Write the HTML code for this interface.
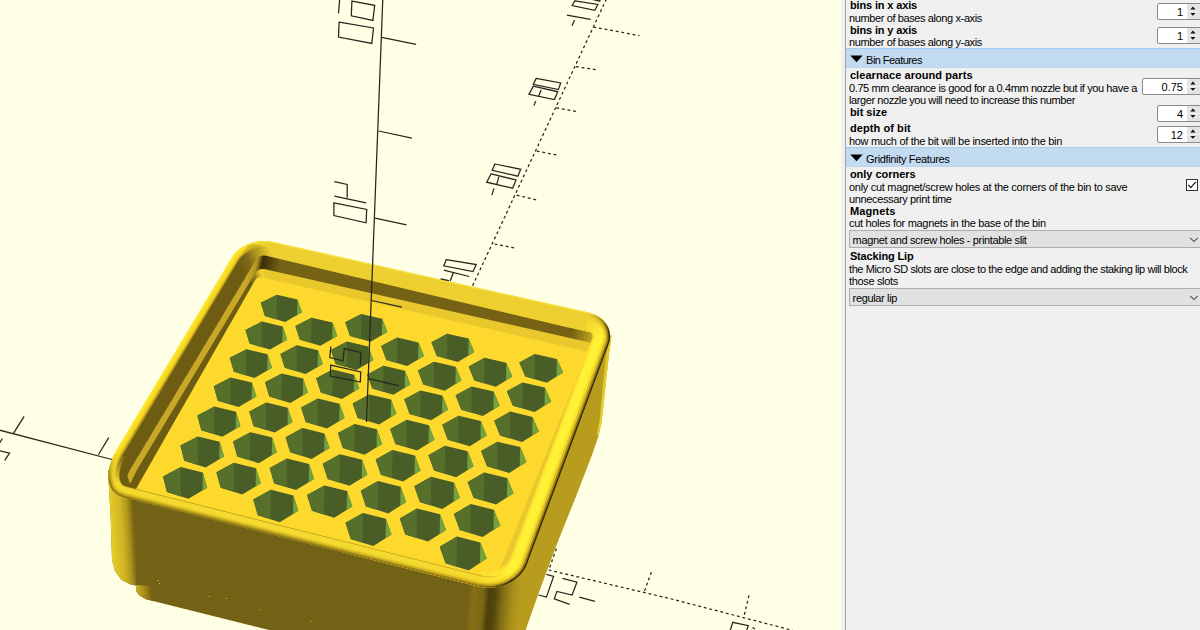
<!DOCTYPE html>
<html><head><meta charset="utf-8"><title>OpenSCAD</title>
<style>
html,body{margin:0;padding:0;background:#f0f0f0;}
body{width:1200px;height:630px;overflow:hidden;position:relative;font-family:"Liberation Sans",sans-serif;}
#vp{position:absolute;left:0;top:0;width:841px;height:630px;background:#ffffe5;overflow:hidden;}
#pn{position:absolute;left:841px;top:0;width:359px;height:630px;background:#f0f0f0;overflow:hidden;}
#pn .vl{position:absolute;left:4px;top:0;width:1px;height:630px;background:#a3a3a3;}
.t{position:absolute;font-size:11px;line-height:13px;height:13px;white-space:nowrap;color:#000;}
.t.b{font-weight:bold;}
.hd{position:absolute;left:5px;width:354px;height:18px;background:#c3dbf1;border-top:1px solid #9fcdf3;border-bottom:1px solid #b8d6f0;}
.sp{position:absolute;height:15px;background:#fff;border:1px solid #8a8a8a;border-radius:2px;}
.sp .v{position:absolute;width:60px;text-align:right;top:1.8px;font-size:11px;line-height:13px;}/*0*/
.sp .btn{position:absolute;top:0;width:20px;height:15px;background:linear-gradient(#e4e4e4 0,#e4e4e4 7px,#f4f4f4 7px,#f4f4f4 8px,#e4e4e4 8px);}
.sp .ar{position:absolute;top:0;}
.cb{position:absolute;left:8px;width:360px;height:16px;background:#e1e1e1;border:1px solid #adadad;}
.ck{position:absolute;width:10px;height:10px;background:#fff;border:1px solid #333;}
</style></head><body>
<div id="vp"><svg width="841" height="630" viewBox="0 0 841 630">
<defs>
<linearGradient id="gFront" gradientUnits="userSpaceOnUse" x1="108" y1="500" x2="135" y2="498.3">
 <stop offset="0" stop-color="#eed22a"/><stop offset="0.15" stop-color="#e0c427"/><stop offset="0.45" stop-color="#d0b424"/><stop offset="0.68" stop-color="#b0961c"/><stop offset="0.88" stop-color="#7c6815"/><stop offset="0.95" stop-color="#736115"/>
</linearGradient>
<linearGradient id="gCorner" gradientUnits="userSpaceOnUse" x1="468" y1="590" x2="521" y2="594.4">
 <stop offset="0" stop-color="#736115"/><stop offset="0.12" stop-color="#857016"/><stop offset="0.3" stop-color="#7a6614"/><stop offset="0.4" stop-color="#4c3f0b"/><stop offset="0.52" stop-color="#55460c"/><stop offset="0.65" stop-color="#7e6a15"/><stop offset="0.85" stop-color="#a88e1b"/><stop offset="1" stop-color="#b89c1e"/>
</linearGradient>
<linearGradient id="gRightEdge" gradientUnits="userSpaceOnUse" x1="602" y1="380" x2="607" y2="380.6">
 <stop offset="0" stop-color="#b89c1e"/><stop offset="0.4" stop-color="#e2c628"/><stop offset="1" stop-color="#efd42c"/>
</linearGradient>
</defs>
<polygon points="611.6,335.0 609.0,355.0 606.7,374.4 604.0,400.0 601.6,422.0 598.5,436.0 592.0,455.0 574.6,500.0 558.5,540.0 530.5,614.3 525.5,630.2 480.0,630.2 500.0,560.0 586.0,400.0 605.0,340.0" fill="#b89c1e" />
<polygon points="611.6,335.0 609.0,355.0 606.7,374.4 604.0,400.0 601.6,422.0 598.5,436.0 596.5,434.0 599.5,421.0 601.5,400.0 603.5,374.0 605.0,355.0 606.0,338.0" fill="url(#gRightEdge)" />
<polygon points="108.0,470.0 110.8,520.0 112.0,560.0 115.0,571.0 121.7,580.0 130.6,584.4 136.0,585.5 136.0,591.0 139.4,595.5 146.0,599.3 270.0,630.2 520.0,630.2 520.0,570.0 300.0,500.0 140.0,470.0" fill="#736115" />
<polygon points="112.0,470.0 108.3,477.0 110.8,520.0 112.0,560.0 115.0,571.0 121.7,580.0 130.6,584.4 136.0,585.5 136.0,466.0" fill="url(#gFront)" />
<polygon points="466.0,555.0 552.0,555.0 525.5,630.2 466.0,630.2" fill="url(#gCorner)" />
<defs><linearGradient id="gBase" gradientUnits="userSpaceOnUse" x1="136" y1="592" x2="152" y2="591"><stop offset="0" stop-color="#c8ac22"/><stop offset="0.5" stop-color="#a88e1a"/><stop offset="1" stop-color="#736115"/></linearGradient></defs>
<polygon points="136.0,585.0 136.0,591.0 139.4,595.5 146.0,599.3 154.0,601.3 152.0,586.0" fill="url(#gBase)" />
<rect x="157.9" y="580.0" width="1" height="1" fill="#e0c026"/>
<rect x="159.0" y="583.0" width="1" height="1" fill="#e0c026"/>
<rect x="208.9" y="596.0" width="1" height="1" fill="#e0c026"/>
<rect x="225.9" y="598.0" width="1" height="1" fill="#e0c026"/>
<rect x="259.0" y="609.2" width="1" height="1" fill="#e0c026"/>
<rect x="310.6" y="620.9" width="1" height="1" fill="#e0c026"/>
<clipPath id="clipOuter"><path d="M232.2,257.1 C239.2,245.3 257.2,238.4 272.3,241.8 L588.8,312.6 C605.0,316.3 613.9,330.5 608.7,344.5 L527.2,563.8 C520.7,581.4 498.9,591.5 478.5,586.4 L123.1,497.0 C106.5,492.8 103.6,471.7 116.6,449.9 Z"/></clipPath>
<path d="M232.2,257.1 C239.2,245.3 257.2,238.4 272.3,241.8 L588.8,312.6 C605.0,316.3 613.9,330.5 608.7,344.5 L527.2,563.8 C520.7,581.4 498.9,591.5 478.5,586.4 L123.1,497.0 C106.5,492.8 103.6,471.7 116.6,449.9 Z" fill="#edd030"/>
<g clip-path="url(#clipOuter)">
<path d="M249.2,243.8 C256.5,241.0 264.8,240.1 272.3,241.8 L588.8,312.6 C596.9,314.5 603.2,318.9 606.8,324.7" fill="none" stroke="#f5e03c" stroke-width="2.6"/>
<defs>
<linearGradient id="gA" gradientUnits="userSpaceOnUse" x1="238" y1="261" x2="270" y2="249">
 <stop offset="0" stop-color="#6e5c12"/><stop offset="0.3" stop-color="#80691a"/><stop offset="0.6" stop-color="#b39a22"/><stop offset="1" stop-color="#edd030"/></linearGradient>
<linearGradient id="gB" gradientUnits="userSpaceOnUse" x1="250" y1="261" x2="280" y2="267.5">
 <stop offset="0" stop-color="#c8a826"/><stop offset="0.22" stop-color="#b89a22"/><stop offset="0.4" stop-color="#3a2e08"/><stop offset="0.6" stop-color="#4c3e0b"/><stop offset="1" stop-color="#766214"/></linearGradient>
<linearGradient id="gC" gradientUnits="userSpaceOnUse" x1="250" y1="282" x2="268" y2="276">
 <stop offset="0" stop-color="#6e5c12"/><stop offset="0.35" stop-color="#9c8218"/><stop offset="0.7" stop-color="#f0d230"/><stop offset="1" stop-color="#e8c82d"/></linearGradient>
<linearGradient id="gBend" gradientUnits="userSpaceOnUse" x1="572" y1="330" x2="594" y2="335">
 <stop offset="0" stop-color="#766214"/><stop offset="0.5" stop-color="#9a8218"/><stop offset="1" stop-color="#c8aa22"/></linearGradient>
</defs>
<path d="M95.7,500.0 L244.1,250.4 Q248.7,242.7 257.5,244.7 L640.0,330.4 L640,640 L100,640 Z" fill="url(#gA)"/>
<path d="M127.3,475.4 L129.9,470.0 L255.3,261.0 Q259.4,254.1 267.2,256.0 L589.1,332.4 Q594.0,333.5 592.5,338.3 L590.0,346.6 L560,600 L200,502 L129.8,483.5 Z" fill="url(#gB)"/>
<clipPath id="clipB"><path d="M127.3,475.4 L129.9,470.0 L255.3,261.0 Q259.4,254.1 267.2,256.0 L589.1,332.4 Q594.0,333.5 592.5,338.3 L590.0,346.6 L560,600 L200,502 L129.8,483.5 Z"/></clipPath>
<g clip-path="url(#clipB)"><polygon points="570.0,325.4 600.0,333.4 600.0,347.9 568.0,338.6" fill="url(#gBend)" /></g>
<path d="M130.0,484.0 L136.9,470.0 L254.7,273.7 Q258.3,267.7 265.1,269.3 L640.0,353.9 L640,640 L300,640 L138.5,489.3 Z" fill="url(#gC)"/>
<path d="M254.9,280.6 Q257.3,276.3 262.2,277.4 L587.5,351.5 L490.0,593.5 L129.4,500.6 Z" fill="#fdd92d" />
<polygon points="260.8,302.8 276.9,294.7 297.4,299.4 302.0,312.3 285.1,321.9 264.9,316.1" fill="#485e26" />
<polygon points="260.8,302.8 276.9,294.7 276.6,319.5 264.9,316.1" fill="#56702c" />
<polygon points="297.4,299.4 302.0,312.3 297.1,315.1" fill="#76a23e" />
<polygon points="245.5,330.0 261.9,321.6 282.7,326.4 287.2,339.7 270.0,349.6 249.6,343.6" fill="#485e26" />
<polygon points="245.5,330.0 261.9,321.6 261.6,347.1 249.6,343.6" fill="#56702c" />
<polygon points="282.7,326.4 287.2,339.7 282.4,342.5" fill="#76a23e" />
<polygon points="229.8,357.8 246.5,349.2 267.5,354.2 272.0,367.8 254.5,377.9 233.9,371.8" fill="#485e26" />
<polygon points="229.8,357.8 246.5,349.2 246.2,375.4 233.9,371.8" fill="#56702c" />
<polygon points="267.5,354.2 272.0,367.8 267.2,370.6" fill="#76a23e" />
<polygon points="213.8,386.3 230.7,377.5 251.9,382.6 256.4,396.6 238.6,407.0 217.8,400.7" fill="#485e26" />
<polygon points="213.8,386.3 230.7,377.5 230.4,404.5 217.8,400.7" fill="#56702c" />
<polygon points="251.9,382.6 256.4,396.6 251.6,399.4" fill="#76a23e" />
<polygon points="197.3,415.6 214.5,406.6 236.0,411.8 240.4,426.2 222.3,436.8 201.3,430.3" fill="#485e26" />
<polygon points="197.3,415.6 214.5,406.6 214.2,434.3 201.3,430.3" fill="#56702c" />
<polygon points="236.0,411.8 240.4,426.2 235.7,429.0" fill="#76a23e" />
<polygon points="180.4,445.6 197.9,436.4 219.6,441.8 224.0,456.5 205.6,467.4 184.3,460.8" fill="#485e26" />
<polygon points="180.4,445.6 197.9,436.4 197.6,464.9 184.3,460.8" fill="#56702c" />
<polygon points="219.6,441.8 224.0,456.5 219.3,459.3" fill="#76a23e" />
<polygon points="163.1,476.5 180.9,467.0 202.8,472.5 207.1,487.7 188.4,498.8 166.9,492.0" fill="#485e26" />
<polygon points="163.1,476.5 180.9,467.0 180.6,496.4 166.9,492.0" fill="#56702c" />
<polygon points="202.8,472.5 207.1,487.7 202.5,490.4" fill="#76a23e" />
<polygon points="295.4,326.1 311.6,317.8 332.5,322.6 337.3,335.9 320.4,345.7 299.9,339.7" fill="#485e26" />
<polygon points="295.4,326.1 311.6,317.8 311.3,343.1 299.9,339.7" fill="#56702c" />
<polygon points="332.5,322.6 337.3,335.9 332.2,338.8" fill="#76a23e" />
<polygon points="280.4,353.9 296.9,345.3 318.0,350.3 322.8,363.9 305.6,373.9 284.8,367.8" fill="#485e26" />
<polygon points="280.4,353.9 296.9,345.3 296.6,371.3 284.8,367.8" fill="#56702c" />
<polygon points="318.0,350.3 322.8,363.9 317.7,366.9" fill="#76a23e" />
<polygon points="265.0,382.3 281.8,373.6 303.1,378.6 307.9,392.6 290.3,402.9 269.4,396.6" fill="#485e26" />
<polygon points="265.0,382.3 281.8,373.6 281.5,400.2 269.4,396.6" fill="#56702c" />
<polygon points="303.1,378.6 307.9,392.6 302.8,395.6" fill="#76a23e" />
<polygon points="249.3,411.5 266.3,402.5 287.8,407.7 292.5,422.1 274.7,432.6 253.6,426.2" fill="#485e26" />
<polygon points="249.3,411.5 266.3,402.5 266.0,430.0 253.6,426.2" fill="#56702c" />
<polygon points="287.8,407.7 292.5,422.1 287.5,425.1" fill="#76a23e" />
<polygon points="233.1,441.5 250.3,432.2 272.1,437.6 276.8,452.3 258.7,463.2 237.3,456.5" fill="#485e26" />
<polygon points="233.1,441.5 250.3,432.2 250.0,460.5 237.3,456.5" fill="#56702c" />
<polygon points="272.1,437.6 276.8,452.3 271.8,455.3" fill="#76a23e" />
<polygon points="216.4,472.2 234.0,462.7 256.0,468.3 260.7,483.3 242.3,494.5 220.7,487.7" fill="#485e26" />
<polygon points="216.4,472.2 234.0,462.7 233.7,491.8 220.7,487.7" fill="#56702c" />
<polygon points="256.0,468.3 260.7,483.3 255.7,486.3" fill="#76a23e" />
<polygon points="345.3,322.3 361.2,314.0 382.2,318.8 387.3,332.0 370.6,341.8 350.0,335.9" fill="#485e26" />
<polygon points="345.3,322.3 361.2,314.0 360.9,339.0 350.0,335.9" fill="#56702c" />
<polygon points="382.2,318.8 387.3,332.0 381.9,335.2" fill="#76a23e" />
<polygon points="330.9,350.0 347.1,341.5 368.3,346.4 373.4,359.9 356.5,370.0 335.6,363.9" fill="#485e26" />
<polygon points="330.9,350.0 347.1,341.5 346.8,367.2 335.6,363.9" fill="#56702c" />
<polygon points="368.3,346.4 373.4,359.9 368.0,363.1" fill="#76a23e" />
<polygon points="316.2,378.3 332.7,369.6 354.1,374.7 359.2,388.6 341.9,398.9 320.9,392.6" fill="#485e26" />
<polygon points="316.2,378.3 332.7,369.6 332.4,396.0 320.9,392.6" fill="#56702c" />
<polygon points="354.1,374.7 359.2,388.6 353.8,391.8" fill="#76a23e" />
<polygon points="301.1,407.4 317.8,398.5 339.5,403.7 344.6,417.9 327.0,428.5 305.7,422.1" fill="#485e26" />
<polygon points="301.1,407.4 317.8,398.5 317.5,425.6 305.7,422.1" fill="#56702c" />
<polygon points="339.5,403.7 344.6,417.9 339.2,421.2" fill="#76a23e" />
<polygon points="285.6,437.3 302.6,428.1 324.5,433.4 329.6,448.1 311.7,458.9 290.2,452.3" fill="#485e26" />
<polygon points="285.6,437.3 302.6,428.1 302.3,456.0 290.2,452.3" fill="#56702c" />
<polygon points="324.5,433.4 329.6,448.1 324.2,451.3" fill="#76a23e" />
<polygon points="269.7,467.9 287.0,458.5 309.1,464.0 314.1,479.0 296.0,490.1 274.2,483.4" fill="#485e26" />
<polygon points="269.7,467.9 287.0,458.5 286.7,487.3 274.2,483.4" fill="#56702c" />
<polygon points="309.1,464.0 314.1,479.0 308.8,482.3" fill="#76a23e" />
<polygon points="253.3,499.4 271.0,489.7 293.4,495.4 298.3,510.8 279.8,522.2 257.8,515.3" fill="#485e26" />
<polygon points="253.3,499.4 271.0,489.7 270.7,519.3 257.8,515.3" fill="#56702c" />
<polygon points="293.4,495.4 298.3,510.8 293.1,514.1" fill="#76a23e" />
<polygon points="381.2,346.1 397.3,337.6 418.5,342.5 423.9,356.0 407.2,366.0 386.3,360.0" fill="#485e26" />
<polygon points="381.2,346.1 397.3,337.6 397.0,363.0 386.3,360.0" fill="#56702c" />
<polygon points="418.5,342.5 423.9,356.0 418.2,359.4" fill="#76a23e" />
<polygon points="367.2,374.4 383.5,365.7 405.0,370.7 410.4,384.6 393.4,394.8 372.2,388.6" fill="#485e26" />
<polygon points="367.2,374.4 383.5,365.7 383.2,391.8 372.2,388.6" fill="#56702c" />
<polygon points="405.0,370.7 410.4,384.6 404.7,388.0" fill="#76a23e" />
<polygon points="352.7,403.4 369.3,394.4 391.0,399.6 396.4,413.8 379.1,424.4 357.7,418.0" fill="#485e26" />
<polygon points="352.7,403.4 369.3,394.4 369.0,421.3 357.7,418.0" fill="#56702c" />
<polygon points="391.0,399.6 396.4,413.8 390.7,417.3" fill="#76a23e" />
<polygon points="337.9,433.1 354.8,424.0 376.8,429.3 382.1,443.9 364.5,454.7 342.9,448.1" fill="#485e26" />
<polygon points="337.9,433.1 354.8,424.0 354.5,451.6 342.9,448.1" fill="#56702c" />
<polygon points="376.8,429.3 382.1,443.9 376.5,447.4" fill="#76a23e" />
<polygon points="322.7,463.7 339.9,454.3 362.1,459.7 367.4,474.7 349.5,485.8 327.7,479.1" fill="#485e26" />
<polygon points="322.7,463.7 339.9,454.3 339.6,482.7 327.7,479.1" fill="#56702c" />
<polygon points="362.1,459.7 367.4,474.7 361.8,478.2" fill="#76a23e" />
<polygon points="307.1,495.0 324.5,485.4 347.0,491.0 352.4,506.4 334.2,517.8 312.0,510.8" fill="#485e26" />
<polygon points="307.1,495.0 324.5,485.4 324.2,514.7 312.0,510.8" fill="#56702c" />
<polygon points="347.0,491.0 352.4,506.4 346.7,509.9" fill="#76a23e" />
<polygon points="431.4,342.2 447.3,333.7 468.6,338.6 474.3,352.1 457.8,362.1 436.8,356.0" fill="#485e26" />
<polygon points="431.4,342.2 447.3,333.7 447.0,359.0 436.8,356.0" fill="#56702c" />
<polygon points="468.6,338.6 474.3,352.1 468.3,355.8" fill="#76a23e" />
<polygon points="418.0,370.4 434.1,361.7 455.7,366.8 461.4,380.6 444.6,390.8 423.3,384.6" fill="#485e26" />
<polygon points="418.0,370.4 434.1,361.7 433.8,387.6 423.3,384.6" fill="#56702c" />
<polygon points="455.7,366.8 461.4,380.6 455.4,384.2" fill="#76a23e" />
<polygon points="404.3,399.3 420.6,390.4 442.4,395.6 448.1,409.8 431.1,420.2 409.6,413.9" fill="#485e26" />
<polygon points="404.3,399.3 420.6,390.4 420.3,417.0 409.6,413.9" fill="#56702c" />
<polygon points="442.4,395.6 448.1,409.8 442.1,413.4" fill="#76a23e" />
<polygon points="390.2,429.0 406.8,419.8 428.9,425.2 434.5,439.7 417.2,450.5 395.4,443.9" fill="#485e26" />
<polygon points="390.2,429.0 406.8,419.8 406.5,447.2 395.4,443.9" fill="#56702c" />
<polygon points="428.9,425.2 434.5,439.7 428.6,443.4" fill="#76a23e" />
<polygon points="375.7,459.4 392.5,450.1 414.9,455.5 420.6,470.5 403.0,481.5 380.9,474.8" fill="#485e26" />
<polygon points="375.7,459.4 392.5,450.1 392.2,478.2 380.9,474.8" fill="#56702c" />
<polygon points="414.9,455.5 420.6,470.5 414.6,474.2" fill="#76a23e" />
<polygon points="360.8,490.7 378.0,481.1 400.6,486.7 406.2,502.0 388.3,513.4 366.0,506.4" fill="#485e26" />
<polygon points="360.8,490.7 378.0,481.1 377.7,510.1 366.0,506.4" fill="#56702c" />
<polygon points="400.6,486.7 406.2,502.0 400.3,505.8" fill="#76a23e" />
<polygon points="345.5,522.8 363.0,512.9 385.9,518.7 391.5,534.5 373.3,546.1 350.7,539.0" fill="#485e26" />
<polygon points="345.5,522.8 363.0,512.9 362.7,542.8 350.7,539.0" fill="#56702c" />
<polygon points="385.9,518.7 391.5,534.5 385.6,538.3" fill="#76a23e" />
<polygon points="468.7,366.4 484.6,357.8 506.3,362.8 512.3,376.6 495.8,386.8 474.4,380.6" fill="#485e26" />
<polygon points="468.7,366.4 484.6,357.8 484.3,383.4 474.4,380.6" fill="#56702c" />
<polygon points="506.3,362.8 512.3,376.6 506.0,380.5" fill="#76a23e" />
<polygon points="455.6,395.3 471.8,386.4 493.7,391.5 499.7,405.7 482.9,416.1 461.3,409.8" fill="#485e26" />
<polygon points="455.6,395.3 471.8,386.4 471.5,412.8 461.3,409.8" fill="#56702c" />
<polygon points="493.7,391.5 499.7,405.7 493.4,409.6" fill="#76a23e" />
<polygon points="442.2,424.8 458.6,415.7 480.8,421.0 486.8,435.5 469.8,446.3 447.8,439.7" fill="#485e26" />
<polygon points="442.2,424.8 458.6,415.7 458.3,442.8 447.8,439.7" fill="#56702c" />
<polygon points="480.8,421.0 486.8,435.5 480.5,439.5" fill="#76a23e" />
<polygon points="428.4,455.2 445.1,445.8 467.6,451.3 473.6,466.2 456.2,477.2 434.1,470.5" fill="#485e26" />
<polygon points="428.4,455.2 445.1,445.8 444.8,473.7 434.1,470.5" fill="#56702c" />
<polygon points="467.6,451.3 473.6,466.2 467.3,470.2" fill="#76a23e" />
<polygon points="414.3,486.3 431.2,476.8 453.9,482.4 459.9,497.7 442.3,509.0 419.9,502.1" fill="#485e26" />
<polygon points="414.3,486.3 431.2,476.8 430.9,505.5 419.9,502.1" fill="#56702c" />
<polygon points="453.9,482.4 459.9,497.7 453.6,501.7" fill="#76a23e" />
<polygon points="399.8,518.4 417.0,508.5 440.0,514.3 446.0,530.0 428.0,541.6 405.3,534.5" fill="#485e26" />
<polygon points="399.8,518.4 417.0,508.5 416.7,538.0 405.3,534.5" fill="#56702c" />
<polygon points="440.0,514.3 446.0,530.0 439.7,534.0" fill="#76a23e" />
<polygon points="519.3,362.5 535.0,353.9 556.8,358.9 563.1,372.6 546.8,382.8 525.3,376.6" fill="#485e26" />
<polygon points="519.3,362.5 535.0,353.9 534.7,379.3 525.3,376.6" fill="#56702c" />
<polygon points="556.8,358.9 563.1,372.6 556.5,376.7" fill="#76a23e" />
<polygon points="506.9,391.2 522.8,382.4 544.8,387.5 551.2,401.6 534.6,412.0 512.9,405.7" fill="#485e26" />
<polygon points="506.9,391.2 522.8,382.4 522.5,408.5 512.9,405.7" fill="#56702c" />
<polygon points="544.8,387.5 551.2,401.6 544.5,405.8" fill="#76a23e" />
<polygon points="494.2,420.7 510.3,411.6 532.6,416.9 538.9,431.4 522.1,442.1 500.1,435.5" fill="#485e26" />
<polygon points="494.2,420.7 510.3,411.6 510.0,438.5 500.1,435.5" fill="#56702c" />
<polygon points="532.6,416.9 538.9,431.4 532.3,435.6" fill="#76a23e" />
<polygon points="481.1,451.0 497.5,441.7 520.1,447.1 526.4,461.9 509.3,472.9 487.0,466.2" fill="#485e26" />
<polygon points="481.1,451.0 497.5,441.7 497.2,469.3 487.0,466.2" fill="#56702c" />
<polygon points="520.1,447.1 526.4,461.9 519.8,466.2" fill="#76a23e" />
<polygon points="467.7,482.0 484.4,472.5 507.2,478.0 513.5,493.3 496.1,504.6 473.6,497.7" fill="#485e26" />
<polygon points="467.7,482.0 484.4,472.5 484.1,500.9 473.6,497.7" fill="#56702c" />
<polygon points="507.2,478.0 513.5,493.3 506.9,497.6" fill="#76a23e" />
<polygon points="453.9,513.9 470.8,504.1 493.9,509.8 500.3,525.5 482.6,537.1 459.8,530.0" fill="#485e26" />
<polygon points="453.9,513.9 470.8,504.1 470.5,533.3 459.8,530.0" fill="#56702c" />
<polygon points="493.9,509.8 500.3,525.5 493.6,529.9" fill="#76a23e" />
<polygon points="439.7,546.7 457.0,536.6 480.3,542.5 486.7,558.6 468.7,570.5 445.6,563.2" fill="#485e26" />
<polygon points="439.7,546.7 457.0,536.6 456.7,566.7 445.6,563.2" fill="#56702c" />
<polygon points="480.3,542.5 486.7,558.6 480.0,563.0" fill="#76a23e" />
<defs><linearGradient id="gFadeL" gradientUnits="userSpaceOnUse" x1="240" y1="254" x2="266" y2="243"><stop offset="0" stop-color="#fff"/><stop offset="1" stop-color="#000"/></linearGradient><mask id="mL" maskUnits="userSpaceOnUse" x="0" y="0" width="841" height="630"><rect x="0" y="0" width="841" height="630" fill="url(#gFadeL)"/></mask></defs>
<g mask="url(#mL)"><path d="M108.7,480.1 C107.6,471.5 110.1,460.8 116.6,449.9 L232.2,257.1 C239.2,245.3 257.2,238.4 272.3,241.8" fill="none" stroke="#a88a18" stroke-width="14.6"/><path d="M108.7,480.1 C107.6,471.5 110.1,460.8 116.6,449.9 L232.2,257.1 C239.2,245.3 257.2,238.4 272.3,241.8" fill="none" stroke="#dcb81e" stroke-width="12.6"/><path d="M108.7,480.1 C107.6,471.5 110.1,460.8 116.6,449.9 L232.2,257.1 C239.2,245.3 257.2,238.4 272.3,241.8" fill="none" stroke="#f6d824" stroke-width="10.4"/><path d="M108.7,480.1 C107.6,471.5 110.1,460.8 116.6,449.9 L232.2,257.1 C239.2,245.3 257.2,238.4 272.3,241.8" fill="none" stroke="#fee628" stroke-width="4.8"/></g>
<defs>
<linearGradient id="gFadeF" gradientUnits="userSpaceOnUse" x1="108.5" y1="480" x2="116" y2="452"><stop offset="0" stop-color="#fff"/><stop offset="1" stop-color="#000"/></linearGradient>
<mask id="mF" maskUnits="userSpaceOnUse" x="0" y="0" width="841" height="630"><rect x="0" y="0" width="841" height="630" fill="url(#gFadeF)"/></mask>
<linearGradient id="gFadeR" gradientUnits="userSpaceOnUse" x1="510" y1="584" x2="478" y2="584"><stop offset="0" stop-color="#fff"/><stop offset="1" stop-color="#000"/></linearGradient>
<mask id="mR" maskUnits="userSpaceOnUse" x="0" y="0" width="841" height="630"><rect x="0" y="0" width="841" height="630" fill="url(#gFadeR)"/></mask>
<linearGradient id="gFadeR2" gradientUnits="userSpaceOnUse" x1="606" y1="334" x2="592" y2="312"><stop offset="0" stop-color="#fff"/><stop offset="1" stop-color="#000"/></linearGradient>
<mask id="mR2" maskUnits="userSpaceOnUse" x="0" y="0" width="841" height="630"><rect x="0" y="0" width="841" height="630" fill="url(#gFadeR2)"/></mask>
</defs>
<g mask="url(#mF)"><path d="M508.1,583.6 C499.3,587.7 488.7,589.0 478.5,586.4 L123.1,497.0 C106.5,492.8 103.6,471.7 116.6,449.9" fill="none" stroke="#b89c20" stroke-width="22.4"/><path d="M508.1,583.6 C499.3,587.7 488.7,589.0 478.5,586.4 L123.1,497.0 C106.5,492.8 103.6,471.7 116.6,449.9" fill="none" stroke="#f4da2e" stroke-width="20.8"/><path d="M508.1,583.6 C499.3,587.7 488.7,589.0 478.5,586.4 L123.1,497.0 C106.5,492.8 103.6,471.7 116.6,449.9" fill="none" stroke="#ecd02a" stroke-width="10.4"/><path d="M508.1,583.6 C499.3,587.7 488.7,589.0 478.5,586.4 L123.1,497.0 C106.5,492.8 103.6,471.7 116.6,449.9" fill="none" stroke="#d9ba22" stroke-width="8.0"/><path d="M508.1,583.6 C499.3,587.7 488.7,589.0 478.5,586.4 L123.1,497.0 C106.5,492.8 103.6,471.7 116.6,449.9" fill="none" stroke="#bfa01c" stroke-width="5.6"/><path d="M508.1,583.6 C499.3,587.7 488.7,589.0 478.5,586.4 L123.1,497.0 C106.5,492.8 103.6,471.7 116.6,449.9" fill="none" stroke="#9d8418" stroke-width="3.2"/><path d="M508.1,583.6 C499.3,587.7 488.7,589.0 478.5,586.4 L123.1,497.0 C106.5,492.8 103.6,471.7 116.6,449.9" fill="none" stroke="#857016" stroke-width="1.4"/></g>
<g mask="url(#mR)"><g mask="url(#mR2)"><path d="M588.8,312.6 C605.0,316.3 613.9,330.5 608.7,344.5 L527.2,563.8 C520.7,581.4 498.9,591.5 478.5,586.4" fill="none" stroke="#fee030" stroke-width="35.2"/><path d="M588.8,312.6 C605.0,316.3 613.9,330.5 608.7,344.5 L527.2,563.8 C520.7,581.4 498.9,591.5 478.5,586.4" fill="none" stroke="#fff236" stroke-width="31.0"/><path d="M588.8,312.6 C605.0,316.3 613.9,330.5 608.7,344.5 L527.2,563.8 C520.7,581.4 498.9,591.5 478.5,586.4" fill="none" stroke="#f8e22c" stroke-width="15.0"/><path d="M588.8,312.6 C605.0,316.3 613.9,330.5 608.7,344.5 L527.2,563.8 C520.7,581.4 498.9,591.5 478.5,586.4" fill="none" stroke="#dcbc22" stroke-width="10.4"/><path d="M588.8,312.6 C605.0,316.3 613.9,330.5 608.7,344.5 L527.2,563.8 C520.7,581.4 498.9,591.5 478.5,586.4" fill="none" stroke="#9a8016" stroke-width="6.4"/><path d="M588.8,312.6 C605.0,316.3 613.9,330.5 608.7,344.5 L527.2,563.8 C520.7,581.4 498.9,591.5 478.5,586.4" fill="none" stroke="#3a300a" stroke-width="3.2"/></g></g>
</g>
<g fill="none" stroke="#26261f" stroke-width="1.25" stroke-linecap="butt"><path d="M382.8,-1.0 L366.5,422.0" />
<path d="M381.7,37.3 L416.1,44.3" />
<path d="M378.6,131.0 L411.9,138.1" />
<path d="M375.1,218.1 L406.5,224.9" />
<path d="M371.7,300.5 L401.9,307.1" />
<path d="M367.9,378.6 L398.7,385.6" />
<path d="M339.7,-1.0 L338.5,13.4" />
<path d="M351.9,1.2 L374.7,5.3 L372.9,20.4 L351.3,15.8 Z" />
<path d="M339.1,22.2 L373.5,28.0 L371.8,43.4 L338.5,37.1 Z" />
<path d="M334.4,181.7 L347.2,184.4 L347.2,197.8" />
<path d="M334.4,196.1 L366.1,202.8" />
<path d="M333.9,202.8 L366.7,209.4 L366.1,222.8 L333.9,215.6 Z" />
<path d="M330.8,346.5 L329.8,357.5 L343.0,360.8 L344.3,348.6 L360.8,352.4 L360.3,365.1" />
<path d="M330.8,365.1 L360.8,371.9 L360.3,382.1 L330.3,376.0 Z" />
<path d="M-1.0,430.0 L111.9,459.5" />
<path d="M13.5,433.3 L24.1,416.3" />
<path d="M98.4,454.8 L108.7,437.6" />
<path d="M-1.0,450.6 L9.5,453.2 L4.8,460.3" />
<path d="M-1.0,444.0 L2.4,438.5" />
<path d="M606.4,-1.0 L472.5,286.0" stroke-dasharray="2.9 2.8"/>
<path d="M593.3,27.0 L639.4,35.6" stroke-dasharray="2.9 2.8"/>
<path d="M575.9,66.7 L597.5,69.8" stroke-dasharray="2.9 2.8"/>
<path d="M556.2,107.8 L578.6,112.0" stroke-dasharray="2.9 2.8"/>
<path d="M536.7,151.1 L559.2,155.4" stroke-dasharray="2.9 2.8"/>
<path d="M516.7,195.2 L537.1,200.0" stroke-dasharray="2.9 2.8"/>
<path d="M494.5,244.0 L515.5,248.2" stroke-dasharray="2.9 2.8"/>
<path d="M575.0,0.8 L597.8,4.5 L594.8,10.3 L572.2,5.5 Z" />
<path d="M591.0,-1.0 L599.7,1.2 L600.3,-1.0" />
<path d="M567.0,15.2 L590.5,19.3" />
<path d="M574.5,20.0 L572.0,25.8" />
<path d="M536.2,78.4 L560.7,82.9 L558.4,89.6 L533.3,84.4 Z" />
<path d="M533.3,86.2 L557.8,91.8 L554.4,99.6 L528.9,94.4 Z" />
<path d="M541.1,90.0 L538.4,96.7" />
<path d="M535.6,101.1 L534.0,105.6" />
<path d="M494.9,164.0 L520.7,169.3 L517.8,176.2 L492.2,170.4 Z" />
<path d="M491.1,173.8 L516.0,180.0 L512.7,188.2 L486.7,182.2 Z" />
<path d="M498.9,176.7 L496.7,184.4" />
<path d="M494.0,188.4 L491.8,195.1" />
<path d="M446.3,259.6 L476.2,264.6 L473.0,271.6 L443.8,265.9 Z" />
<path d="M443.8,270.2 L469.2,276.5" />
<path d="M453.3,272.7 L450.2,281.0" />
<path d="M440.6,278.8 L448.9,280.6" />
<path d="M548.6,570.0 L670.0,598.6 L800.0,632.3" stroke-dasharray="2.9 2.8"/>
<path d="M651.4,572.1 L644.3,591.4" stroke-dasharray="2.9 2.8"/>
<path d="M749.0,595.3 L743.9,616.5" stroke-dasharray="2.9 2.8"/>
<path d="M556.4,548.6 L549.3,568.6" stroke-dasharray="2.9 2.8"/>
<path d="M546.4,574.3 L553.6,576.4 L546.4,597.1 L538.6,595.0" />
<path d="M562.6,578.3 L576.9,582.1 L572.1,595.0 L556.9,591.4 L554.3,598.9 L569.7,604.3" />
<path d="M579.3,597.1 L595.0,601.4" />
<path d="M730.0,631.0 L732.8,622.3 L748.3,625.6 L746.5,631.0" />
<path d="M752.5,627.5 L755.0,629.0" /></g>
</svg></div>
<div id="pn"><div class="vl"></div>
<div class="sp" style="left:316px;top:3px;width:49px"><span class="v" style="left:-35px">1</span><div class="btn" style="left:29px"></div><svg class="ar" style="left:28px" width="13" height="15" viewBox="0 0 13 15"><path d="M4.3,5.4 L6.9,2.6 L9.5,5.4 Z M4.3,8.9 L6.9,11.7 L9.5,8.9 Z" fill="#111"/></svg></div>
<div class="sp" style="left:316px;top:27px;width:49px"><span class="v" style="left:-35px">1</span><div class="btn" style="left:29px"></div><svg class="ar" style="left:28px" width="13" height="15" viewBox="0 0 13 15"><path d="M4.3,5.4 L6.9,2.6 L9.5,5.4 Z M4.3,8.9 L6.9,11.7 L9.5,8.9 Z" fill="#111"/></svg></div>
<div class="sp" style="left:301px;top:78px;width:64px"><span class="v" style="left:-20px">0.75</span><div class="btn" style="left:44px"></div><svg class="ar" style="left:43px" width="13" height="15" viewBox="0 0 13 15"><path d="M4.3,5.4 L6.9,2.6 L9.5,5.4 Z M4.3,8.9 L6.9,11.7 L9.5,8.9 Z" fill="#111"/></svg></div>
<div class="sp" style="left:316px;top:105px;width:49px"><span class="v" style="left:-35px">4</span><div class="btn" style="left:29px"></div><svg class="ar" style="left:28px" width="13" height="15" viewBox="0 0 13 15"><path d="M4.3,5.4 L6.9,2.6 L9.5,5.4 Z M4.3,8.9 L6.9,11.7 L9.5,8.9 Z" fill="#111"/></svg></div>
<div class="sp" style="left:316px;top:126px;width:49px"><span class="v" style="left:-35px">12</span><div class="btn" style="left:29px"></div><svg class="ar" style="left:28px" width="13" height="15" viewBox="0 0 13 15"><path d="M4.3,5.4 L6.9,2.6 L9.5,5.4 Z M4.3,8.9 L6.9,11.7 L9.5,8.9 Z" fill="#111"/></svg></div>
<div class="hd" style="top:48px"><svg width="14" height="8" viewBox="0 0 14 8" style="position:absolute;left:4px;top:6px"><path d="M0.3,0.5 L12.7,0.5 L6.5,7.2 Z" fill="#000"/></svg></div>
<div class="hd" style="top:147px"><svg width="14" height="8" viewBox="0 0 14 8" style="position:absolute;left:4px;top:6px"><path d="M0.3,0.5 L12.7,0.5 L6.5,7.2 Z" fill="#000"/></svg></div>
<div class="cb" style="top:230px"><svg width="10" height="6" viewBox="0 0 10 6" style="position:absolute;left:339px;top:6px"><path d="M1.3,1 L5,4.6 L8.7,1" fill="none" stroke="#555" stroke-width="1.05"/></svg></div>
<div class="cb" style="top:288px"><svg width="10" height="6" viewBox="0 0 10 6" style="position:absolute;left:339px;top:6px"><path d="M1.3,1 L5,4.6 L8.7,1" fill="none" stroke="#555" stroke-width="1.05"/></svg></div>
<div class="ck" style="left:345px;top:179px"><svg style="display:block" width="10" height="10" viewBox="0 0 10 10"><path d="M1.3,4.9 L3.8,7.6 L8.8,1.8" fill="none" stroke="#111" stroke-width="1.2"/></svg></div>
<span class="t b" style="left:8.9px;top:-1.0px;letter-spacing:-0.135px">bins in x axis</span>
<span class="t" style="left:8.0px;top:12.2px;letter-spacing:-0.385px">number of bases along x-axis</span>
<span class="t b" style="left:8.9px;top:23.6px;letter-spacing:-0.135px">bins in y axis</span>
<span class="t" style="left:8.0px;top:36.2px;letter-spacing:-0.385px">number of bases along y-axis</span>
<span class="t" style="left:25.1px;top:54.2px;letter-spacing:-0.548px">Bin Features</span>
<span class="t b" style="left:8.9px;top:68.6px;letter-spacing:0.074px">clearnace around parts</span>
<span class="t" style="left:8.0px;top:81.5px;letter-spacing:-0.394px">0.75 mm clearance is good for a 0.4mm nozzle but if you have a</span>
<span class="t" style="left:8.0px;top:93.5px;letter-spacing:-0.414px">larger nozzle you will need to increase this number</span>
<span class="t b" style="left:8.9px;top:105.5px;letter-spacing:-0.012px">bit size</span>
<span class="t b" style="left:8.9px;top:122.0px;letter-spacing:0.085px">depth of bit</span>
<span class="t" style="left:8.0px;top:134.6px;letter-spacing:-0.308px">how much of the bit will be inserted into the bin</span>
<span class="t" style="left:25.1px;top:153.2px;letter-spacing:-0.341px">Gridfinity Features</span>
<span class="t b" style="left:8.9px;top:167.6px;letter-spacing:-0.028px">only corners</span>
<span class="t" style="left:8.0px;top:180.5px;letter-spacing:-0.288px">only cut magnet/screw holes at the corners of the bin to save</span>
<span class="t" style="left:8.0px;top:192.5px;letter-spacing:-0.367px">unnecessary print time</span>
<span class="t b" style="left:8.9px;top:204.5px;letter-spacing:0.139px">Magnets</span>
<span class="t" style="left:8.0px;top:217.1px;letter-spacing:-0.308px">cut holes for magnets in the base of the bin</span>
<span class="t" style="left:11.6px;top:233.6px;letter-spacing:-0.352px">magnet and screw holes - printable slit</span>
<span class="t b" style="left:8.9px;top:250.1px;letter-spacing:-0.151px">Stacking Lip</span>
<span class="t" style="left:8.0px;top:262.7px;letter-spacing:-0.404px">the Micro SD slots are close to the edge and adding the staking lip will block</span>
<span class="t" style="left:8.0px;top:274.7px;letter-spacing:-0.336px">those slots</span>
<span class="t" style="left:11.6px;top:291.5px;letter-spacing:-0.356px">regular lip</span>
</div>
</body></html>
